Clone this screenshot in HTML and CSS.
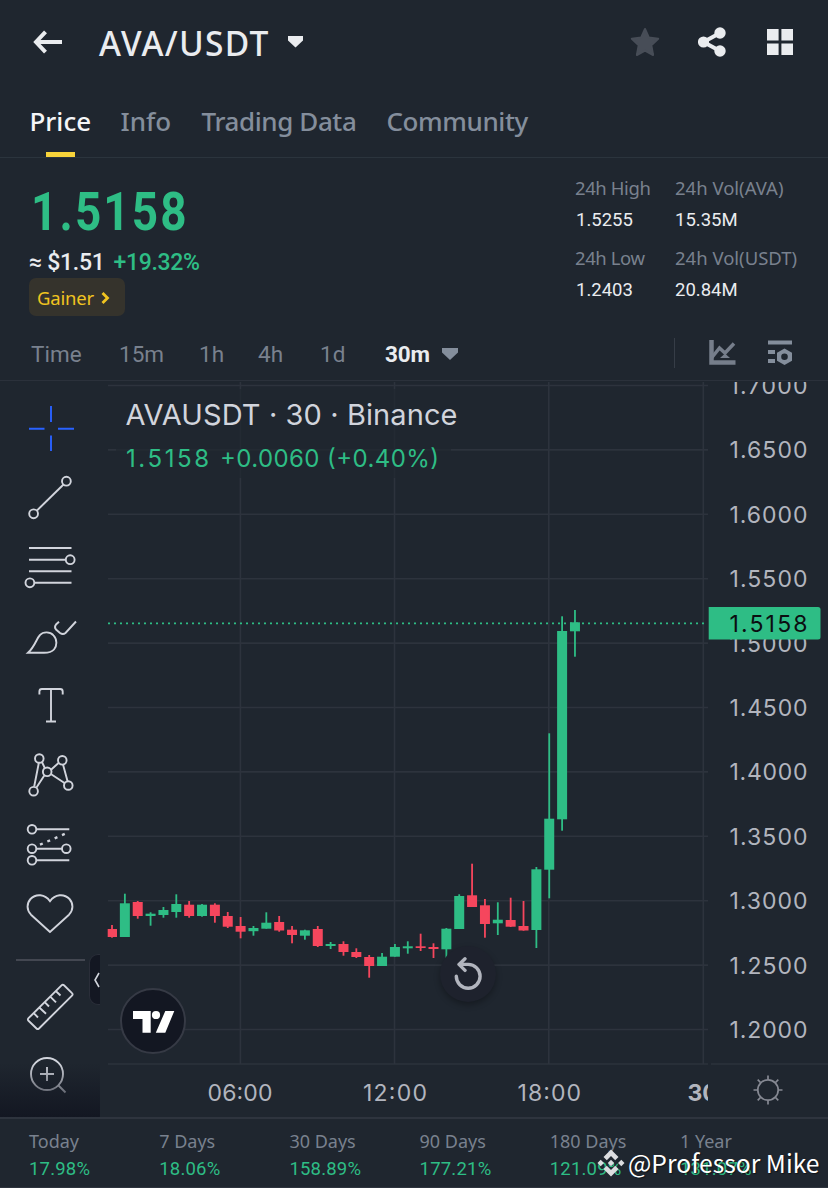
FILE: index.html
```html
<!DOCTYPE html>
<html lang="en">
<head>
    <meta charset="UTF-8">
    <meta name="viewport" content="width=device-width, initial-scale=1.0">
    <title>AVA/USDT</title>
    <link rel="stylesheet" href="styles.css">
</head>
<body>
    <div class="app">
        <header class="topbar">
            <svg class="back" width="30" height="24" viewBox="0 0 30 24"><path d="M12.500 1.800L3 12l9.500 10.200M2.500 12H29" fill="none" stroke="#eaecef" stroke-width="4"/></svg>
            <h1>AVA/USDT</h1>
            <svg class="caret" width="15" height="12" viewBox="0 0 15 12"><path d="M0 0h15v4.500L7.500 11.500 0 4.500z" fill="#eaecef"/></svg>
            <div class="actions">
                <svg width="30" height="30" viewBox="0 0 30 30"><path d="M15 2l3.900 8.600 9.300 1.200-6.900 6.500 1.800 9.700-8.100-4.400L6.900 28l1.800-9.700-6.900-6.500 9.300-1.200z" fill="#474d57" stroke="#474d57" stroke-width="2" stroke-linejoin="round"/></svg>
                <svg width="30" height="30" viewBox="1 0 30 30"><path d="M23 6L6.500 15 23 24" fill="none" stroke="#eaecef" stroke-width="4"/><g fill="#eaecef"><circle cx="6.500" cy="15" r="5.600"/><circle cx="23" cy="6" r="5.700"/><circle cx="23" cy="24" r="5.700"/></g></svg>
                <svg width="30" height="30" viewBox="0 0 30 30"><path d="M2 2h11.600v11.600H2zM16.400 2H28v11.600H16.400zM2 16.400h11.600V28H2zM16.400 16.400H28V28H16.400z" fill="#eaecef"/></svg>
            </div>
        </header>

        <nav class="tabs">
            <a class="active">Price</a>
            <a>Info</a>
            <a>Trading Data</a>
            <a>Community</a>
        </nav>

        <section class="summary">
            <div class="quote">
                <div class="price"><span>1.5158</span></div>
                <div class="fiat"><span class="usd">≈ $1.51</span><span class="change">+19.32%</span></div>
                <div class="tag">Gainer<svg width="9" height="12" viewBox="0 0 9 12"><path d="M1.500 1l5 5-5 5" fill="none" stroke="#f0c420" stroke-width="2.800"/></svg></div>
            </div>
            <dl class="stats">
                <div class="narrow"><dt>24h High</dt><dd>1.5255</dd></div>
                <div><dt>24h Vol(AVA)</dt><dd>15.35M</dd></div>
                <div class="narrow"><dt>24h Low</dt><dd>1.2403</dd></div>
                <div><dt>24h Vol(USDT)</dt><dd>20.84M</dd></div>
            </dl>
        </section>

        <nav class="intervals">
            <span>Time</span>
            <span>15m</span>
            <span>1h</span>
            <span>4h</span>
            <span>1d</span>
            <span class="active">30m<svg width="16" height="12" viewBox="0 0 16 12"><path d="M0 0h16v4.500L8 12 0 4.500z" fill="#848e9c"/></svg></span>
            <div class="chart-tools">
                <svg width="28" height="28" viewBox="0 0 28 28"><path d="M3.500 1v22.500H27.500" fill="none" stroke="#767e8b" stroke-width="4.500"/><path d="M3.500 19l8-10 5.500 5L26 4.500" fill="none" stroke="#767e8b" stroke-width="3.500"/><path d="M12 19l5-4.500 5 4.500z" fill="#767e8b"/></svg>
                <svg width="28" height="28" viewBox="0 1 28 28"><path d="M2 2.500h24v4H2zM2 12h7v4H2zM2 21h7v4H2z" fill="#848e9c"/><path fill-rule="evenodd" d="M18.500 10.500l7.500 4.200v8.100l-7.500 4.200-7.500-4.200v-8.100zM18.500 15.500a3.300 3.300 0 1 0 0 6.600 3.300 3.300 0 0 0 0-6.600z" fill="#848e9c"/></svg>
            </div>
        </nav>

        <main class="chart">
            <aside class="drawbar">
                <svg class="tool cross" viewBox="0 394 100 69.5"><path d="M51 406v16M51 435.500v15.500M29 428.700h15.500M58 428.700h16"/></svg>
                <svg class="tool" viewBox="0 463.5 100 69.5"><path d="M37 510L63.500 484"/><circle cx="66.400" cy="480.700" r="4.400"/><circle cx="33.600" cy="513.300" r="4.400"/></svg>
                <svg class="tool" viewBox="0 533 100 69.5"><path d="M29 548h42.500M29 559.700h37M29 571.200h42.500M34 582.800h37.500"/><circle cx="70.200" cy="559.700" r="4.400"/><circle cx="29.900" cy="582.800" r="4.400"/></svg>
                <svg class="tool" viewBox="0 602.5 100 69.5"><path d="M28 652.300C35 646 36.500 638 40 634.500C43 631 50 630.800 53.500 634.800C57.500 639 57 645.500 54 649C51.500 651.800 48 652.300 44 652.300z"/><path d="M59 621.300l-3 2.700q-2 2.500 0 5l4 3.500q3 2 5.500 0L76 621"/></svg>
                <svg class="tool" viewBox="0 672 100 69.5"><path d="M39.400 694.500v-3q0-2.500 2.500-2.500h18.300q2.500 0 2.500 2.500v3M51 689v32.500M46 721.500h10"/></svg>
                <svg class="tool" viewBox="0 741.5 100 69.5"><path d="M38.800 762.500L34.200 786M42 761.500L45 768M51 769.200L58.500 762.500M44.300 775L36.500 787M51.200 773.700L64.500 782.500M63 764L67.500 780.600"/><circle cx="39.300" cy="758" r="4.300"/><circle cx="62.300" cy="759.800" r="4.300"/><circle cx="47.200" cy="771.300" r="4.300"/><circle cx="33.600" cy="790.700" r="4.300"/><circle cx="68.300" cy="785" r="4.300"/></svg>
                <svg class="tool" viewBox="0 811 100 69.5"><path d="M36.300 829.300h33M36.300 848.700h25.700M36.300 860.300h33"/><path class="dots" d="M40 844.700L68 832.500"/><circle cx="32" cy="829.300" r="4.300"/><circle cx="32" cy="848.700" r="4.300"/><circle cx="66.300" cy="848.700" r="4.300"/><circle cx="32" cy="860.300" r="4.300"/></svg>
                <svg class="tool" viewBox="0 880.5 100 69.5"><path d="M50 931.500L31 914.200C26.500 909.500 26.500 903 30.500 898.500C36 892.800 45 893.500 50 900.700C55 893.500 64 892.800 69.500 898.500C73.500 903 73.500 909.500 69 914.200z"/></svg>
                <hr>
                <svg class="tool" viewBox="0 972.5 100 69.5"><path d="M61.500 985.800q1.200-1.200 2.500 0l8 7.800q1.300 1.200 0 2.500L39 1029q-1.300 1.200-2.500 0l-8-7.800q-1.300-1.200 0-2.500zM33.500 1013.300l4.500 4.700M39 1007.800l7 6.500M44.500 1002.300l4.500 4.700M50 996.800l6 6M55.500 991.300l5 4.700"/></svg>
                <svg class="tool" viewBox="0 1042 100 69.5"><circle cx="47" cy="1074" r="16"/><path d="M40 1074h14M47 1067v14M58.500 1085.500l7 7"/></svg>
                <div class="shade"></div>
                <div class="collapse"><svg width="7" height="16" viewBox="0 0 7 16"><path d="M6 1L2 8l4 7" fill="none" stroke="#d1d4dc" stroke-width="1.600"/></svg></div>
            </aside>

            <div class="plot">
                <svg id="plot" width="608" height="735" viewBox="100 382 608 735">
                    <g id="grid" class="grid"></g>
                    <path class="last-line" d="M108 623.300H708"/>
                    <g id="candles"></g>
                    <rect class="legend-bg" x="116" y="389" width="335" height="89"/>
                    <text class="legend" x="125.500" y="424.500" textLength="332">AVAUSDT · 30 · Binance</text>
                    <text class="legend-value" x="126" y="466.500" textLength="83">1.5158</text>
                    <text class="legend-value" x="220" y="466.500" textLength="219">+0.0060 (+0.40%)</text>
                    <g class="axis">
                        <text x="207.500" y="1100.500" textLength="65">06:00</text>
                        <text x="363" y="1100.500" textLength="64">12:00</text>
                        <text x="517.500" y="1100.500" textLength="63.500">18:00</text>
                        <text x="687.500" y="1100.500" class="day">30</text>
                    </g>
                </svg>
                <svg class="tv-logo" width="66" height="66" viewBox="120 988 66 66"><circle cx="153" cy="1021" r="32" fill="#131722" stroke="#363a45" stroke-width="2"/><path d="M133 1011h17.700v21.700h-8.200v-13.700H133zM165.300 1011h9l-9 21.700h-9.500z" fill="#fff"/><circle cx="156" cy="1015" r="4.100" fill="#fff"/></svg>
                <div class="reset"><svg width="32" height="34" viewBox="452 957 32 34"><path d="M456.300 976.300a11.900 11.900 0 1 0 11.900-11.900H460M465 958.800l-6 5.600 6 6" fill="none" stroke="#b2b5be" stroke-width="3.400" stroke-linecap="round" stroke-linejoin="round"/></svg></div>
            </div>

            <div class="scale">
                <svg width="120" height="735" viewBox="708 382 120 735">
                    <g id="prices" class="axis"></g>
                    <path class="last-tag" d="M708.700 607H818q2.500 0 2.500 2.500v27.500q0 2.500-2.500 2.500H708.700z"/>
                    <text class="last-price" x="729.500" y="631.500" textLength="78">1.5158</text>
                    <path class="grid" d="M711 1064H828"/>
                    <g class="gear"><circle cx="768" cy="1090" r="10.200"/><path d="M768 1075.500v4M768 1100.500v4M753.500 1090h4M778.500 1090h4M757.700 1079.700l2.800 2.800M775.500 1097.500l2.800 2.800M757.700 1100.300l2.800-2.800M775.500 1082.500l2.800-2.800"/></g>
                </svg>
            </div>
        </main>

        <footer class="periods">
            <div><span>Today</span><b>17.98%</b></div>
            <div><span>7 Days</span><b>18.06%</b></div>
            <div><span>30 Days</span><b>158.89%</b></div>
            <div><span>90 Days</span><b>177.21%</b></div>
            <div><span>180 Days</span><b>121.09%</b></div>
            <div><span>1 Year</span><b>131.07%</b></div>
        </footer>

        <div class="watermark">
            <svg width="28" height="28" viewBox="0 0 28 28"><path d="M14 .5l7.500 7.500-3.300 3.300L14 7.100l-4.200 4.200L6.500 8zM14 27.500L6.500 20l3.300-3.300 4.200 4.200 4.200-4.200 3.300 3.300zM3.700 10.800L7 14l-3.300 3.200L.5 14zM24.300 10.800l3.200 3.200-3.200 3.200L21 14zM14 10.800l3.200 3.200-3.200 3.200-3.200-3.200z" fill="#dcdde0"/></svg>
            <span>@Professor Mike</span>
        </div>
    </div>

    <script>
        // wick top, wick bottom, body top, body bottom, direction
        var candles = [
            [925, 937.7, 929, 937, 'down'], [893.7, 937, 903.3, 937, 'up'],
            [901, 918.7, 902, 916, 'down'], [912.3, 925.7, 913.7, 916, 'up'],
            [907, 917.7, 910, 915, 'up'], [894.3, 917.7, 904, 912, 'up'],
            [901, 917.7, 904.7, 916, 'down'], [904, 916.7, 904.7, 916, 'up'],
            [903.3, 922.7, 904.7, 916, 'down'], [912, 928, 916, 926.7, 'down'],
            [917, 938.3, 926, 931.7, 'down'], [926, 935.7, 928, 931.2, 'up'],
            [912.3, 928.7, 922.7, 928.7, 'up'], [916, 931.7, 922, 930.5, 'down'],
            [926, 943.3, 929.7, 935, 'down'], [929.7, 939.7, 930.3, 935.7, 'up'],
            [926, 947, 929, 946, 'down'], [942, 949, 944, 946, 'up'],
            [941.3, 955.7, 944, 952, 'down'], [948.3, 958, 952, 957, 'down'],
            [955, 977.7, 957, 966, 'down'], [953, 966, 956.7, 966, 'up'],
            [944, 956.7, 947, 956.7, 'up'], [941.3, 953.7, 946.3, 948.3, 'up'],
            [933.7, 951, 946.3, 948, 'down'], [943.3, 958, 947, 949, 'down'],
            [928, 958, 928.7, 949.3, 'up'], [894.3, 929, 896, 929, 'up'],
            [863.7, 907, 895.3, 907, 'down'], [899, 937.7, 905.3, 924, 'down'],
            [902.3, 935, 919.7, 923.3, 'up'], [897.7, 927, 920, 926.7, 'down'],
            [901, 930.7, 926, 930.5, 'down'], [867, 948, 869.3, 930, 'up'],
            [733.3, 898.3, 818.7, 869.7, 'up'], [616.3, 830.7, 631, 819.3, 'up'],
            [610, 656.7, 622.3, 631.3, 'up']
        ];
        var html = '';
        candles.forEach((c, i) => {
            var x = 112 + i * 12.86;
            var left = Math.max(x - 5, 107.7);
            html += `<g class="${c[4]}"><rect x="${x - 0.9}" y="${c[0]}" width="1.8" height="${c[1] - c[0]}"/>`;
            html += `<rect x="${left}" y="${c[2]}" width="${x + 5 - left}" height="${c[3] - c[2]}"/></g>`;
        });
        document.getElementById('candles').innerHTML = html;

        var grid = '<path d="M108 1064H708"/>';
        var prices = '';
        for (var i = 0; i <= 10; i++) {
            var y = 385.5 + i * 64.4;
            grid += `<path d="M108 ${y}H708"/>`;
            prices += `<text x="729.5" y="${y + 8.5}" textLength="78">${(1.7 - i * 0.05).toFixed(4)}</text>`;
        }
        [240.4, 394.5, 548.8, 703.3].forEach((x) => {
            grid += `<path d="M${x} 382V1064"/>`;
        });
        document.getElementById('grid').innerHTML = grid;
        document.getElementById('prices').innerHTML = prices;
    </script>
</body>
</html>
```

FILE: styles.css
```css
* {
    box-sizing: border-box;
}
body {
    margin: 0;
    background-color: #1f262f;
    color: #eaecef;
    font-family: "Noto Sans", "Open Sans", sans-serif;
}
svg {
    display: block;
}
.app {
    position: relative;
    display: flex;
    flex-direction: column;
    width: 828px;
    height: 1188px;
    overflow: hidden;
}
.topbar {
    display: flex;
    align-items: center;
    height: 86px;
    padding: 0 33px 2px;
}
.topbar h1 {
    margin: 2px 0 0 36px;
    width: 170px;
    font-size: 33.5px;
    font-weight: 500;
    line-height: 48px;
    letter-spacing: 1.3px;
    white-space: nowrap;
}
.caret {
    margin-left: 19px;
}
.actions {
    display: flex;
    gap: 37.5px;
    margin-left: auto;
}
.tabs {
    display: grid;
    grid-template-columns: 91px 81px 185px auto;
    height: 72px;
    padding-left: 29.5px;
    border-bottom: 1px solid #2b343d;
    color: #848e9c;
    font-size: 26px;
    font-weight: 500;
    line-height: 71px;
    letter-spacing: -0.4px;
}
.tabs a {
    position: relative;
    white-space: nowrap;
}
.tabs a:nth-child(-n+2) {
    letter-spacing: 0;
}
.tabs .active {
    color: #f5f6f8;
}
.tabs .active::after {
    content: "";
    position: absolute;
    left: 16px;
    bottom: 0;
    width: 29px;
    height: 5px;
    background-color: #f8d33a;
}
.summary {
    display: flex;
    justify-content: space-between;
    height: 168px;
    padding: 17px 0 0 29px;
}
.price {
    height: 72px;
    color: #2ebd85;
    font-family: Roboto, sans-serif;
    font-size: 54px;
    font-weight: 700;
    line-height: 73px;
}
.price span {
    display: inline-block;
    margin-left: 2px;
    letter-spacing: 2.5px;
    transform: scaleX(0.85);
    transform-origin: left;
}
.fiat {
    display: flex;
    gap: 9px;
    height: 31px;
    font-family: Roboto, sans-serif;
    font-size: 23px;
    font-weight: 500;
    line-height: 32px;
    letter-spacing: -0.3px;
}
.change {
    color: #2ebd85;
}
.tag {
    display: flex;
    align-items: center;
    gap: 7px;
    width: 96px;
    height: 38px;
    padding: 1px 0 0 8px;
    border-radius: 7px;
    background-color: #35332c;
    color: #f0c420;
    font-size: 18.5px;
    letter-spacing: -0.2px;
}
.stats {
    display: grid;
    grid-template-columns: 99px 153px;
    grid-auto-rows: 69.5px;
    margin: 0;
}
.stats dt {
    color: #79818e;
    font-size: 18.5px;
    line-height: 26px;
    white-space: nowrap;
}
.stats .narrow dt {
    margin-left: -1px;
    letter-spacing: -0.4px;
}
.stats dd {
    margin: 6px 0 0;
    font-family: Roboto, sans-serif;
    font-size: 18.5px;
    line-height: 26px;
}
.intervals {
    display: grid;
    grid-template-columns: 88px 80px 59px 62px 65px 289px auto;
    align-items: center;
    height: 55px;
    padding-left: 31px;
    border-bottom: 1px solid #2b313b;
    color: #79818e;
    font-family: Roboto, sans-serif;
    font-size: 22.5px;
    line-height: 30px;
}
.intervals span {
    padding-top: 2px;
}
.intervals .active {
    display: flex;
    align-items: center;
    gap: 12.5px;
    color: #eaecef;
    font-weight: 700;
    letter-spacing: -0.2px;
}
.chart-tools {
    display: flex;
    align-items: center;
    gap: 30px;
    height: 30px;
    padding-left: 33px;
    border-left: 1px solid #363d47;
}
.chart {
    display: grid;
    grid-template-columns: 100px 608px 120px;
    height: 735px;
    margin-top: 1px;
}
.drawbar {
    position: relative;
    padding-top: 12px;
}
.tool {
    width: 100px;
    height: 69.5px;
    fill: none;
    stroke: #d1d4dc;
    stroke-width: 1.9;
}
.tool.cross {
    stroke: #2962ff;
}
.tool .dots {
    stroke-width: 2.4;
    stroke-dasharray: 3 5;
}
.drawbar hr {
    width: 69px;
    height: 2px;
    margin: 9px 0 11px 15.5px;
    border: 0;
    background-color: #434751;
}
.shade {
    position: absolute;
    left: 0;
    bottom: 0;
    width: 100px;
    height: 54px;
    background: linear-gradient(rgba(19, 23, 34, 0), #131722);
}
.collapse {
    position: absolute;
    right: 0;
    top: 572px;
    width: 11px;
    height: 51px;
    padding: 17px 0 0 3px;
    border: 1.5px solid #2a2e39;
    border-right: 0;
    border-radius: 9px 0 0 9px;
    background-color: #131722;
}
.plot {
    position: relative;
}
.grid {
    stroke: #2d333d;
    stroke-width: 1.6;
}
.last-line {
    stroke: #2ebd85;
    stroke-width: 1.8;
    stroke-dasharray: 2 4;
}
.up {
    fill: #2ebd85;
}
.down {
    fill: #f6465d;
}
.legend-bg {
    fill: rgba(31, 38, 47, 0.7);
}
.legend,
.legend-value,
.axis,
.last-price {
    font-family: Inter, sans-serif;
}
.legend {
    fill: #d1d4dc;
    font-size: 29px;
}
.legend-value {
    fill: #2ebd85;
    font-size: 24px;
}
.axis {
    fill: #b2b5be;
    font-size: 23px;
}
.day {
    font-weight: 700;
}
.last-tag {
    fill: #2ebd85;
}
.last-price {
    fill: #0b0e11;
    font-size: 23px;
}
.gear {
    fill: none;
    stroke: #868993;
    stroke-width: 1.7;
}
.tv-logo {
    position: absolute;
    left: 20px;
    top: 606px;
}
.reset {
    position: absolute;
    left: 340px;
    top: 564px;
    display: flex;
    width: 56px;
    height: 56px;
    align-items: center;
    justify-content: center;
    border-radius: 50%;
    background-color: #1e222d;
    box-shadow: 0 3px 6px rgba(0, 0, 0, 0.3);
}
.periods {
    display: grid;
    grid-template-columns: repeat(6, 130.2px);
    height: 71px;
    padding: 9px 0 0 29px;
    border-top: 2px solid #2e343e;
    border-bottom: 1px solid #2e343e;
}
.periods span {
    display: block;
    color: #79818e;
    font-size: 18px;
    line-height: 26px;
}
.periods b {
    display: block;
    margin-top: 2px;
    color: #2ebd85;
    font-family: Roboto, sans-serif;
    font-size: 18.5px;
    font-weight: 400;
    line-height: 27px;
    letter-spacing: 0.2px;
}
.watermark {
    position: absolute;
    left: 597px;
    bottom: 7px;
    display: flex;
    align-items: center;
    gap: 3px;
    height: 36px;
    color: #fff;
    font-family: "Noto Sans CJK SC", sans-serif;
    font-size: 24.7px;
    white-space: nowrap;
    text-shadow: 1px 1px 1px rgba(0, 0, 0, 0.5);
}
.watermark span {
    margin-top: -2px;
}
```
